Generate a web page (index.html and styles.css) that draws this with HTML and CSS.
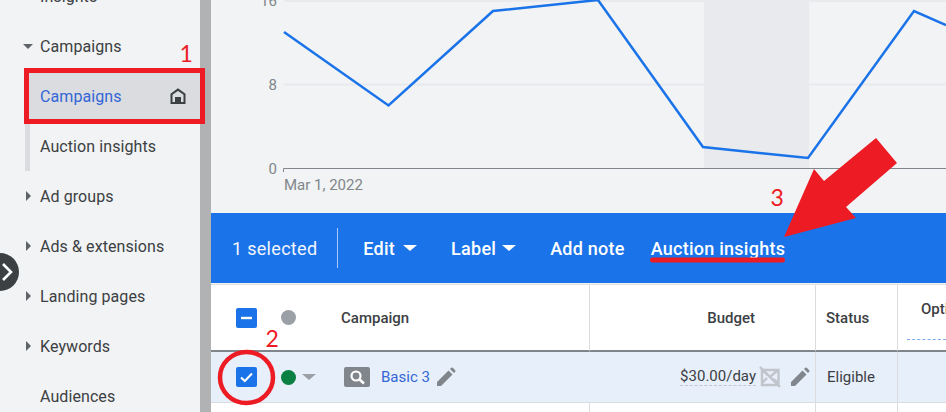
FILE: index.html
```html
<!DOCTYPE html>
<html lang="en">
<head>
<meta charset="utf-8">
<title>Campaigns</title>
<link rel="stylesheet" href="styles.css">
</head>
<body>
<div class="page">
  <nav class="sidenav">
    <div class="nav-item">Insights</div>
    <div class="nav-item"><span class="tri tri-down"></span>Campaigns</div>
    <div class="subnav">
      <div class="sub-item active">Campaigns
        <svg class="home" viewBox="0 0 16 16" width="16" height="16"><path d="M1.500 15V6.300L8 1.600 14.500 6.300V15Z" fill="none" stroke="#3c4043" stroke-width="2"/><rect x="5" y="9" width="6" height="6.500" fill="#3c4043"/></svg>
      </div>
      <div class="sub-item">Auction insights</div>
    </div>
    <div class="nav-item"><span class="tri"></span>Ad groups</div>
    <div class="nav-item"><span class="tri"></span>Ads &amp; extensions</div>
    <div class="nav-item"><span class="tri"></span>Landing pages</div>
    <div class="nav-item"><span class="tri"></span>Keywords</div>
    <div class="nav-item">Audiences</div>
  </nav>
  <div class="scrollbar"></div>
  <main class="main">
    <svg class="chart" viewBox="211 0 735 213" width="735" height="213">
      <rect x="704" y="0" width="105" height="168" fill="#e8eaed"/>
      <path d="M284 1H946M284 84.500H946" stroke="#e8eaed" stroke-width="2" fill="none"/>
      <path d="M283.500 172V168.500H946" stroke="#80868b" stroke-width="1" fill="none"/>
      <text class="axis" x="277" y="6" text-anchor="end">16</text>
      <text class="axis" x="277" y="90" text-anchor="end">8</text>
      <text class="axis" x="277" y="174" text-anchor="end">0</text>
      <text class="axis" x="284" y="190">Mar 1, 2022</text>
      <path d="M284 32 388.500 105.500 493 11 598 0 703 147 808 158 914 11 946 25" fill="none" stroke="#1a73e8" stroke-width="2.500"/>
    </svg>
    <div class="toolbar">
      <span class="selected">1 selected</span>
      <span class="divider"></span>
      <span class="action action-edit">Edit<i class="caret"></i></span>
      <span class="action action-label">Label<i class="caret caret-label"></i></span>
      <span class="action action-note">Add note</span>
      <span class="action action-insights">Auction insights</span>
    </div>
    <div class="table">
      <div class="cell head first">
        <span class="check"><svg viewBox="0 0 21 20" width="21" height="20"><path d="M5 10H16" stroke="#fff" stroke-width="2.400"/></svg></span>
        <span class="dot grey"></span>
        <span class="title">Campaign</span>
      </div>
      <div class="cell head budget"><span class="title">Budget</span></div>
      <div class="cell head status"><span class="title">Status</span></div>
      <div class="cell head opt"><span class="title">Optimization score</span></div>

      <div class="cell row first">
        <span class="check"><svg viewBox="0 0 21 20" width="21" height="20"><path d="M5 10.500 8.800 14 16 6.500" fill="none" stroke="#fff" stroke-width="2"/></svg></span>
        <span class="dot green"></span>
        <i class="caret grey-caret"></i>
        <svg class="search" viewBox="0 0 26 20" width="26" height="20"><rect width="26" height="20" rx="2" fill="#80868b"/><circle cx="12" cy="9" r="4.500" fill="none" stroke="#fff" stroke-width="2.200"/><path d="M15.500 12.500 20 16.500" stroke="#fff" stroke-width="2.600"/></svg>
        <a class="link">Basic 3</a>
        <svg class="pencil" viewBox="0 0 20 20" width="20" height="20"><path d="M1 19V15L12.500 3.500 16.500 7.500 5 19ZM14 2 15.300.8Q16 .2 16.800.8L19.200 3.200Q19.800 4 19.200 4.700L18 6Z" fill="#80868b"/></svg>
      </div>
      <div class="cell row budget">
        <span class="amount">$30.00/day</span>
        <svg class="muted" viewBox="0 0 22 22" width="22" height="22"><path d="M3 4H19.500V19H3ZM3 4 11 11 19 4M3 17 8 12M14 13 19.500 17M1 1 21 21" fill="none" stroke="#c0c4cb" stroke-width="2.400"/></svg>
        <svg class="pencil pencil-budget" viewBox="0 0 20 20" width="20" height="20"><path d="M1 19V15L12.500 3.500 16.500 7.500 5 19ZM14 2 15.300.8Q16 .2 16.800.8L19.200 3.200Q19.800 4 19.200 4.700L18 6Z" fill="#80868b"/></svg>
      </div>
      <div class="cell row status"><span>Eligible</span></div>
      <div class="cell row opt"></div>

      <div class="cell blank first"></div>
      <div class="cell blank budget"></div>
      <div class="cell blank status"></div>
      <div class="cell blank opt"></div>
    </div>
  </main>

  <button class="collapse" type="button" aria-label="Expand"><svg viewBox="0 0 12 20" width="12" height="20"><path d="M2 2 10 10 2 18" fill="none" stroke="#fff" stroke-width="2.600"/></svg></button>

  <svg class="marks" viewBox="0 0 946 412" width="946" height="412">
    <rect x="26.500" y="70.500" width="176" height="51" fill="none" stroke="#ed1c24" stroke-width="5"/>
    <ellipse cx="246.500" cy="377.500" rx="26.500" ry="25.500" fill="none" stroke="#ed1c24" stroke-width="4.500"/>
    <path d="M784 237 814 169 824 181 876 138 897 163 846 207 856 218Z" fill="#ed1c24"/>
    <rect x="650" y="257.500" width="135" height="5" rx="2.500" fill="#ed1c24"/>
    <text class="mark" x="179.500" y="62">1</text>
    <text class="mark" x="265.500" y="347">2</text>
    <text class="mark" x="770.500" y="206">3</text>
  </svg>
</div>
</body>
</html>
```

FILE: styles.css
```css
* { box-sizing: border-box; }
html, body { margin: 0; padding: 0; overflow: hidden; }
body { font-family: Roboto, "Liberation Sans", sans-serif; background: #f1f3f4; }

.page {
  position: relative;
  display: flex;
  width: 946px;
  height: 412px;
  overflow: hidden;
  background: #f1f3f4;
}

/* side navigation */
.sidenav {
  flex: 0 0 200px;
  margin-top: -29px;
  font-size: 16px;
  letter-spacing: 0.08px;
  color: #3c4043;
}
.nav-item {
  position: relative;
  display: flex;
  align-items: center;
  height: 50px;
  padding-left: 40px;
}
.tri {
  position: absolute;
  left: 26px;
  top: 20px;
  width: 0;
  height: 0;
  border-left: 5px solid #5f6368;
  border-top: 5px solid transparent;
  border-bottom: 5px solid transparent;
}
.tri-down {
  left: 23px;
  top: 23px;
  border-top: 5px solid #5f6368;
  border-left: 5px solid transparent;
  border-right: 5px solid transparent;
  border-bottom: 0;
}
.subnav {
  margin-left: 25px;
  border-left: 5px solid #dadce0;
}
.sub-item {
  display: flex;
  align-items: center;
  justify-content: space-between;
  height: 50px;
  padding: 0 14px 0 10px;
}
.sub-item.active {
  color: #3367d6;
  background: #dadce0;
}
.home { display: block; }

.scrollbar { flex: 0 0 11px; background: #b1b2b4; }

/* main */
.main {
  flex: 1 1 auto;
  min-width: 0;
  display: flex;
  flex-direction: column;
}
.chart { display: block; flex: 0 0 213px; }
.axis {
  font-family: Roboto, "Liberation Sans", sans-serif;
  font-size: 15px;
  fill: #80868b;
}

.toolbar {
  display: flex;
  align-items: center;
  flex: 0 0 70px;
  padding-left: 21px;
  background: #1a73e8;
  color: #fff;
  font-size: 18px;
  font-weight: 500;
  letter-spacing: 0.25px;
  white-space: nowrap;
}
.selected { font-weight: 400; letter-spacing: 0.3px; color: #f1f6fe; }
.divider {
  width: 1px;
  height: 40px;
  margin: 0 25px 0 20px;
  background: #a8c7fa;
}
.action { display: inline-flex; align-items: center; }
.action-edit { margin-right: 34px; }
.action-label { margin-right: 34px; }
.action-note { margin-right: 26px; }
.caret {
  width: 0;
  height: 0;
  margin-left: 8px;
  border-top: 6px solid #fff;
  border-left: 7px solid transparent;
  border-right: 7px solid transparent;
}
.caret-label { margin-left: 6px; }

/* table */
.table {
  flex: 1 1 auto;
  display: grid;
  grid-template-columns: 378px 226px 82px 49px;
  grid-template-rows: 67px 51px 1fr;
  margin-top: 1px;
  border-top: 1px solid #e0e0e0;
  background: #fff;
  color: #3c4043;
  font-size: 15px;
}
.cell { display: flex; align-items: center; min-width: 0; overflow: hidden; white-space: nowrap; }
.budget, .status, .opt { border-left: 1px solid #dadce0; }
.budget { justify-content: flex-end; }
.head { border-bottom: 2px solid #80868b; }
.head.first { padding-left: 25px; }
.row { background: #e7effb; border-bottom: 1px solid #dadce0; }
.row.first { padding-left: 25px; }
.row.budget { border-left: 1px solid #e7effb; }
.title { font-weight: 500; }
.head.budget { padding-right: 60px; }
.head.status { padding-left: 10px; }
.head.opt { position: relative; align-items: flex-start; padding: 15px 0 0 23px; }
.head.opt::after {
  content: "";
  position: absolute;
  left: 9px;
  right: 0;
  top: 54px;
  border-top: 1px dashed #7baaf7;
}
.blank { background: #fff; }
.blank.first { border: 0; }

.check {
  flex: 0 0 21px;
  display: block;
  width: 21px;
  height: 20px;
  border-radius: 2px;
  background: #1a73e8;
}
.check svg { display: block; }
.dot { flex: 0 0 15px; width: 15px; height: 15px; border-radius: 50%; margin-left: 24px; }
.dot.grey { background: #9aa0a6; }
.dot.green { background: #0b8043; }
.head.first .title { margin-left: 45px; }
.grey-caret {
  flex: 0 0 auto;
  margin-left: 6px;
  border-top-color: #9aa0a6;
}
.search { flex: 0 0 auto; margin-left: 28px; display: block; }
.link { margin-left: 11px; color: #3367d6; }
.pencil { flex: 0 0 auto; margin-left: 6px; display: block; }
.amount {
  padding-bottom: 1px;
  border-bottom: 1px dashed #c4c7cc;
  line-height: 16px;
}
.muted { flex: 0 0 auto; margin-left: 3px; display: block; }
.pencil-budget { margin-left: 9px; margin-right: 5px; }
.row.status { padding-left: 11px; }

/* overlays */
.collapse {
  position: absolute;
  left: -19px;
  top: 253px;
  display: flex;
  align-items: center;
  width: 38px;
  height: 38px;
  padding: 0 0 0 20px;
  border: 0;
  border-radius: 50%;
  background: #3c4043;
}
.collapse svg { display: block; }
.marks { position: absolute; left: 0; top: 0; pointer-events: none; }
.mark { font-family: Lato, "Liberation Sans", sans-serif; font-size: 23px; fill: #ed1c24; }
```
